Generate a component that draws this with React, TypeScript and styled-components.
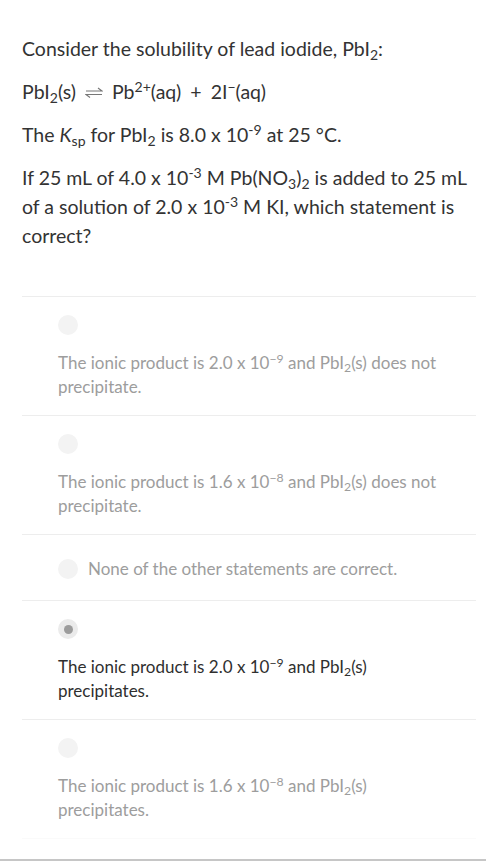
import React, { FC, ReactNode } from "react";
import styled, { createGlobalStyle } from "styled-components";

const GlobalStyle = createGlobalStyle`
  html, body {
    margin: 0;
    padding: 0;
    background: #fff;
  }
  body {
    font-family: Lato, "Open Sans", "Liberation Sans", sans-serif;
    color: #333;
  }
`;

interface OptionProps {
  selected?: boolean;
  inline?: boolean;
  children: ReactNode;
}

const EqArrow: FC = () => (
  <ArrowSvg width="18" height="11" viewBox="0 0 18 11">
    <path d="M1 4H17L13 1" fill="none" stroke="#777" strokeWidth="1.1" />
    <path d="M17 7.5H1L5 10.5" fill="none" stroke="#777" strokeWidth="1.1" />
  </ArrowSvg>
);

const Option: FC<OptionProps> = ({ selected, inline, children }) => (
  <OptionRow $inline={inline}>
    <Radio $selected={selected} />
    <Label $selected={selected}>{children}</Label>
  </OptionRow>
);

export default function App() {
  return (
    <Wrapper>
      <GlobalStyle />
      <Question>
        <P>
          Consider the solubility of lead iodide, PbI<sub>2</sub>:
        </P>
        <P>
          PbI<sub>2</sub>(s)
          <Op>
            <EqArrow />
          </Op>
          Pb<sup>2+</sup>(aq)
          <Op>+</Op>
          2I<sup>−</sup>(aq)
        </P>
        <P>
          The <i>K</i>
          <sub>sp</sub> for PbI<sub>2</sub> is 8.0 x 10<sup>-9</sup> at 25 °C.
        </P>
        <P>
          If 25 mL of 4.0 x 10<sup>-3</sup> M Pb(NO<sub>3</sub>)<sub>2</sub> is added to 25 mL
          of a solution of 2.0 x 10<sup>-3</sup> M KI, which statement is correct?
        </P>

        <Options>
          <Option>
            The ionic product is 2.0 x 10<sup>−9</sup> and PbI<sub>2</sub>(s) does not
            precipitate.
          </Option>
          <Option>
            The ionic product is 1.6 x 10<sup>−8</sup> and PbI<sub>2</sub>(s) does not
            precipitate.
          </Option>
          <Option inline>None of the other statements are correct.</Option>
          <Option selected>
            The ionic product is 2.0 x 10<sup>−9</sup> and PbI<sub>2</sub>(s) precipitates.
          </Option>
          <Option>
            The ionic product is 1.6 x 10<sup>−8</sup> and PbI<sub>2</sub>(s) precipitates.
          </Option>
        </Options>
      </Question>
    </Wrapper>
  );
}

const Wrapper = styled.div`
  border-bottom: 2px solid #c6c6c6;

  sup,
  sub {
    font-size: 72%;
    line-height: 0;
    position: relative;
    vertical-align: baseline;
  }
  sup {
    top: -0.5em;
  }
  sub {
    bottom: -0.28em;
  }
`;

const Question = styled.div`
  padding: 34px 8px 20px 22px;
`;

const P = styled.p`
  margin: 0 0 14px;
  font-size: 19.5px;
  line-height: 29px;
  color: #333;
`;

const Op = styled.span`
  display: inline-block;
  margin: 0 9px;
`;

const ArrowSvg = styled.svg`
  display: inline-block;
  vertical-align: middle;
  position: relative;
  top: -2px;
`;

const Options = styled.div`
  margin-top: 46px;
  margin-right: 2px;
  border-top: 1px solid #ededed;
`;

const OptionRow = styled.div<{ $inline?: boolean }>`
  display: flex;
  flex-wrap: wrap;
  align-items: center;
  column-gap: 10px;
  row-gap: 16px;
  padding: ${(p) => (p.$inline ? "22px 26px 19px 36px" : "18px 26px 16px 36px")};
  border-bottom: 1px solid #ededed;

  &:last-child {
    border-bottom-color: #fafafa;
  }
`;

const Radio = styled.span<{ $selected?: boolean }>`
  flex: none;
  width: 20px;
  height: 20px;
  border-radius: 50%;
  background: ${(p) => (p.$selected ? "#ebebeb" : "#f3f3f3")};
  display: flex;
  align-items: center;
  justify-content: center;

  &::after {
    content: "";
    display: ${(p) => (p.$selected ? "block" : "none")};
    width: 9px;
    height: 9px;
    border-radius: 50%;
    background: #9c9c9c;
  }
`;

const Label = styled.div<{ $selected?: boolean }>`
  flex: 0 1 auto;
  font-size: 17px;
  line-height: 24px;
  color: ${(p) => (p.$selected ? "#2f2f2f" : "#9d9d9d")};
`;
